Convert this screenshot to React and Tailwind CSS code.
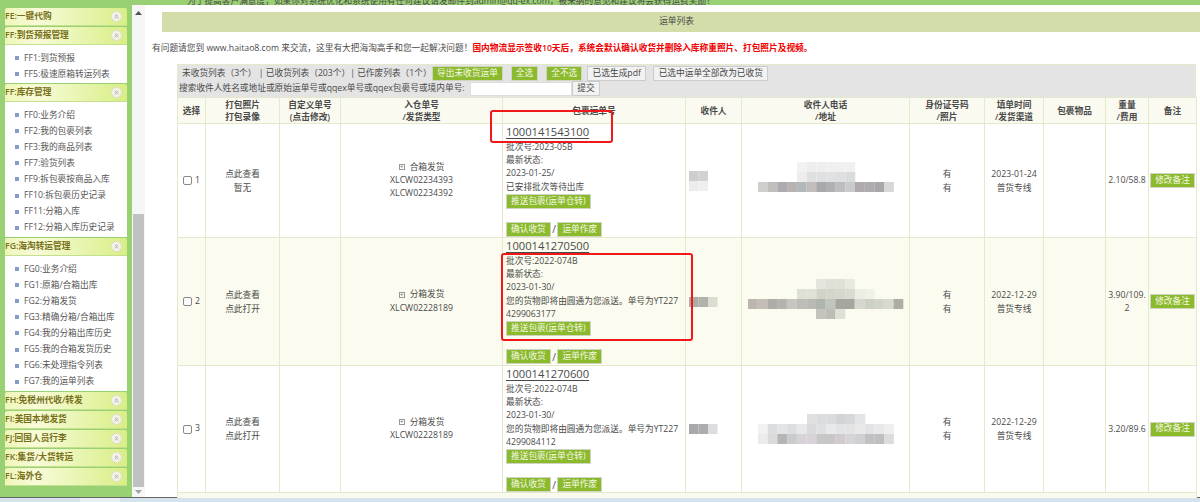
import { ChevronsUp } from "lucide-react";

const font = "font-['Open_Sans','Noto_Sans_CJK_SC',sans-serif]";

const menu = [
  { title: "FE:一键代购", listH: "", items: [] },
  { title: "FF:到货预报管理", listH: "h-[38px]", items: ["FF1:到货预报", "FF5:极速原箱转运列表"] },
  {
    title: "FF:库存管理",
    listH: "h-[135px]",
    items: [
      "FF0:业务介绍",
      "FF2:我的包裹列表",
      "FF3:我的商品列表",
      "FF7:验货列表",
      "FF9:拆包裹按商品入库",
      "FF10:拆包裹历史记录",
      "FF11:分箱入库",
      "FF12:分箱入库历史记录",
    ],
  },
  {
    title: "FG:海淘转运管理",
    listH: "h-[135px]",
    items: [
      "FG0:业务介绍",
      "FG1:原箱/合箱出库",
      "FG2:分箱发货",
      "FG3:精确分箱/合箱出库",
      "FG4:我的分箱出库历史",
      "FG5:我的合箱发货历史",
      "FG6:未处理指令列表",
      "FG7:我的运单列表",
    ],
  },
  { title: "FH:免税州代收/转发", listH: "", items: [] },
  { title: "FI:美国本地发货", listH: "", items: [] },
  { title: "FJ:回国人员行李", listH: "", items: [] },
  { title: "FK:集货/大货转运", listH: "", items: [] },
  { title: "FL:海外仓", listH: "", items: [] },
];

const headers = [
  ["选择"],
  ["打包照片", "打包录像"],
  ["自定义单号", "(点击修改)"],
  ["入仓单号", "/发货类型"],
  ["包裹运单号"],
  ["收件人"],
  ["收件人电话", "/地址"],
  ["身份证号码", "/照片"],
  ["填单时间", "/发货渠道"],
  ["包裹物品"],
  ["重量", "/费用"],
  ["备注"],
];

const rows = [
  {
    n: 1,
    height: "h-[114px]",
    bg: "bg-white",
    photo: ["点此查看", "暂无"],
    type: "合箱发货",
    codes: ["XLCW02234393", "XLCW02234392"],
    no: "1000141543100",
    batch: "批次号:2023-05B",
    date: "2023-01-25/",
    status: ["已安排批次等待出库"],
    filled: "2023-01-24",
    weight: "2.10/58.8",
    nameBlur: [
      ["#cfcdcf", "#d3d2d3"],
      ["#ececec", "#efefef"],
    ],
    addr: {
      w: 136,
      h: 30,
      shift: "mb-[7px]",
      lines: [
        { y: 0, x: 39, c: ["#f2f2f2", "#eeeeee", "#eeeeee", "#f0f0f0", "#f0f0f0", "#f0f0f0"] },
        { y: 10, x: 39, c: ["#ededed", "#dfe0e2", "#dfe0e2", "#e0e1e3", "#dddfe1", "#d9dcdc"] },
        { y: 20, x: 0, c: ["#d0cfcc", "#c0bdbc", "#aeaab0", "#b8b2b2", "#b3b8ba", "#c2bcbb", "#a9a9ad", "#b0b0b3", "#bdbcc0", "#c8cacb", "#aeaaad", "#aeacb0", "#a9a6a8", "#d7d8d9"] },
      ],
    },
  },
  {
    n: 2,
    height: "h-[128px]",
    bg: "bg-[#fbfcef]",
    photo: ["点此查看", "点此打开"],
    type: "分箱发货",
    codes: ["XLCW02228189"],
    no: "1000141270500",
    batch: "批次号:2022-074B",
    date: "2023-01-30/",
    status: ["您的货物即将由圆通为您派送。单号为YT227", "4299063177"],
    filled: "2022-12-29",
    weight: "3.90/109.2",
    nameBlur: [["#adaca6", "#b2b2ac", "#dcdcd2"]],
    addr: {
      w: 156,
      h: 40,
      shift: "mb-[6px]",
      lines: [
        { y: 0, x: 68, c: ["#e4e5dc", "#dedfd5", "#dfe0d6", "#e8e9de"] },
        { y: 10, x: 49, c: ["#dce0d5", "#e0e1d6", "#d1d3c8", "#d4d5cb", "#d6d8cd", "#d9dbd0", "#eceee3", "#f1f2e7"] },
        { y: 20, x: 0, c: ["#bdb5b0", "#c4bdb7", "#b0ada8", "#b6b2ac", "#c8c5bf", "#bfbcb6", "#b9bab4", "#aeb4ae", "#c2c5bc", "#a7a7a0", "#a6a6a0", "#d5d8cd", "#cdd1c5", "#d2d3c9", "#d9dacf", "#aeada3"] },
        { y: 30, x: 68, c: ["#c4c4bd", "#bdbdb5", "#e0e1d6"] },
      ],
    },
  },
  {
    n: 3,
    height: "h-[127px]",
    bg: "bg-white",
    photo: ["点此查看", "点此打开"],
    type: "分箱发货",
    codes: ["XLCW02228189"],
    no: "1000141270600",
    batch: "批次号:2022-074B",
    date: "2023-01-30/",
    status: ["您的货物即将由圆通为您派送。单号为YT227", "4299084112"],
    filled: "2022-12-29",
    weight: "3.20/89.6",
    nameBlur: [["#a9a8aa", "#acabad", "#dddde0"]],
    addr: {
      w: 136,
      h: 30,
      shift: "",
      lines: [
        { y: 0, x: 49, c: ["#e0e0e2", "#dbdcde", "#dadbdd", "#d2d3d5", "#d6d8da", "#e4e5e6"] },
        { y: 10, x: 0, c: ["#f2f2f3", "#dcdde0", "#e3e4e6", "#dddee1", "#e8e8ea", "#d9dadc", "#dfe0e2", "#e8e9eb", "#e3e4e6", "#e2e3e5", "#e9e9ea", "#e2e3e4", "#e8e8e9", "#eeeeef"] },
        { y: 20, x: 0, c: ["#ebebec", "#dadadb", "#b5b5b3", "#c8ccce", "#d5d3d5", "#d9d3d9", "#c7c7ca", "#cbc6c6", "#cfcbcf", "#d6d4d8", "#d0d0d2", "#c1c1c3", "#bfbfc1", "#dcdcde"] },
      ],
    },
  },
];

// 打码的地址,按色块画
const AddressBlur = ({ w, h, shift, lines }) => (
  <svg width={w} height={h} className={`mx-auto block ${shift}`}>
    {lines.map((r) =>
      r.c.map((c, i) => (
        <rect key={r.y + "-" + i} x={r.x + i * 9.7} y={r.y} width="9.8" height="10" fill={c} />
      ))
    )}
  </svg>
);

const NameBlur = ({ cells }) => (
  <svg width="30" height={cells.length * 10} className="block ml-[3px]">
    {cells.map((row, y) =>
      row.map((c, x) => <rect key={y + "-" + x} x={x * 9.5} y={y * 10} width="9.5" height="10" fill={c} />)
    )}
  </svg>
);

const GreenBtn = ({ children, className = "" }) => (
  <span
    className={`flex items-center justify-center w-fit h-[15px] bg-[#8cba2d] border border-[#cfd4c4] text-[#f4f8e6] px-[4px] whitespace-nowrap ${className}`}
  >
    {children}
  </span>
);

const GrayBtn = ({ children, className = "" }) => (
  <span
    className={`flex items-center justify-center h-[15px] bg-[#f2f2f2] border border-[#cccccc] text-[#444] whitespace-nowrap ${className}`}
  >
    {children}
  </span>
);

const Sidebar = () => (
  <aside className="w-[132px] bg-[#9ad074] pl-[5px] pr-[5px] pt-[3px] shrink-0 text-[8.7px]">
    {menu.map((m) => (
      <div key={m.title} className="mb-px">
        <div className="h-[18px] flex items-center justify-between bg-gradient-to-r from-[#eef6b8] via-[#f8fbd8] via-25% to-[#d8ee84] border-b border-[#c3e08c] pr-[5px] rounded-t-[2px]">
          <span className="text-[#77701a] font-semibold leading-none">{m.title}</span>
          <span className="w-[11px] h-[11px] rounded-full bg-[#f4f4ea] border border-[#dedfd0] flex items-center justify-center">
            <ChevronsUp size={7} strokeWidth={2} className="text-[#777]" />
          </span>
        </div>
        {m.items.length > 0 && (
          <ul className={`bg-white pl-[10px] pt-[5px] ${m.listH}`}>
            {m.items.map((it) => (
              <li key={it} className="h-[16.1px] flex items-center gap-[5px] text-[#555] leading-none">
                <span className="w-[4px] h-[4px] bg-[#7f9fc9] shrink-0" />
                <span className="whitespace-nowrap">{it}</span>
              </li>
            ))}
          </ul>
        )}
      </div>
    ))}
  </aside>
);

const Scrollbar = () => (
  <div className="w-[13px] bg-[#f6f6f6] flex flex-col items-center shrink-0">
    <div className="h-[16px] flex items-center justify-center">
      <svg width="7" height="4">
        <path d="M3.5 0L7 4H0z" fill="#555" />
      </svg>
    </div>
    <div className="h-[193px]" />
    <div className="w-[11px] h-[273px] bg-[#c1c1c1]" />
    <div className="h-[10px] flex items-center justify-center">
      <svg width="7" height="4">
        <path d="M0 0H7L3.5 4z" fill="#a3a3a3" />
      </svg>
    </div>
  </div>
);

const cell = "border border-[#e4e9cc] p-0";

export default function App() {
  return (
    <div className={`relative w-[1200px] h-[502px] overflow-hidden bg-white flex flex-col text-[8.7px] text-[#4a4a4a] ${font}`}>
      <div className="h-[5px] bg-[#9ad074] overflow-hidden pl-[187px] shrink-0">
        <div className="-mt-[5px] leading-[13px] whitespace-nowrap">
          为了提高客户满意度&#65292;如果你对系统优化和系统使用有任何建议请发邮件到<u>admin@qq-ex.com</u>&#65292;被采纳的意见和建议将会获得运费奖励&#65281;
        </div>
      </div>
      <div className="flex-1 flex min-h-0">
        <Sidebar />
        <Scrollbar />
        <main className="flex-1 min-w-0 relative">
          <div className="ml-[17px] mt-[7px] h-[20px] bg-[#d3dda9] flex items-center justify-center pr-[9px]">
            运单列表
          </div>
          <p className="mt-[9px] ml-[7px] h-[14px] leading-[14px] whitespace-nowrap">
            有问题请您到 www.haitao8.com 来交流&#65292;这里有大把海淘高手和您一起解决问题&#65281;
            <b className="text-[#f00000] font-semibold">
              国内物流显示签收10天后&#65292;系统会默认确认收货并删除入库称重照片、打包照片及视频。
            </b>
          </p>
          <div className="ml-[32px] w-[1019px] mt-[9px] bg-[#e4e4e4] border border-[#e4e9cc] border-b-0 h-[33px] pt-px">
            <div className="h-[15px] flex items-center whitespace-nowrap pl-[4px]">
              <span className="w-[250px]">未收货列表&#65288;3个&#65289;&nbsp;|&nbsp;已收货列表&#65288;203个&#65289;|&nbsp;已作废列表&#65288;1个&#65289;</span>
              <GreenBtn className="w-[71px] px-0">导出未收货运单</GreenBtn>
              <GreenBtn className="ml-[8px] w-[28px] px-0">全选</GreenBtn>
              <GreenBtn className="ml-[8px] w-[37px] px-0">全不选</GreenBtn>
              <GrayBtn className="ml-[5px] w-[59px]">已选生成pdf</GrayBtn>
              <GrayBtn className="ml-[7px] w-[115px]">已选中运单全部改为已收货</GrayBtn>
            </div>
            <div className="h-[15px] flex items-center whitespace-nowrap pl-[1px]">
              <span className="w-[291px]">搜索收件人姓名或地址或原始运单号或qqex单号或qqex包裹号或境内单号:</span>
              <span className="w-[102px] h-[14px] bg-white border border-[#dddddd]" />
              <GrayBtn className="w-[28px]">提交</GrayBtn>
            </div>
          </div>
          <table className="ml-[32px] w-[1019px] table-fixed border-collapse">
            <colgroup>
              <col className="w-[28px]" />
              <col className="w-[74px]" />
              <col className="w-[61px]" />
              <col className="w-[162px]" />
              <col className="w-[183px]" />
              <col className="w-[56px]" />
              <col className="w-[168px]" />
              <col className="w-[75px]" />
              <col className="w-[59px]" />
              <col className="w-[62px]" />
              <col className="w-[43px]" />
              <col className="w-[48px]" />
            </colgroup>
            <thead>
              <tr className="h-[26px] bg-[#fafaf0]">
                {headers.map((h) => (
                  <th key={h[0]} className={`${cell} font-semibold leading-[12px]`}>
                    {h.map((l) => (
                      <div key={l}>{l}</div>
                    ))}
                  </th>
                ))}
              </tr>
            </thead>
            <tbody>
              {rows.map((r) => (
                <tr key={r.n} className={`${r.height} ${r.bg}`}>
                  <td className={`${cell} text-center whitespace-nowrap`}>
                    <span className="inline-block w-[9px] h-[9px] border border-[#888888] rounded-[2px] bg-white align-middle mr-[3px]" />
                    <span className="align-middle">{r.n}</span>
                  </td>
                  <td className={`${cell} text-center leading-[14px]`}>
                    <div>{r.photo[0]}</div>
                    <div>{r.photo[1]}</div>
                  </td>
                  <td className={cell} />
                  <td className={`${cell} text-center leading-[13.3px]`}>
                    <div className="flex items-center justify-center gap-[5px]">
                      <span className="w-[6px] h-[6px] border border-[#999999] text-[#666666] text-[6px] leading-none flex items-center justify-center">+</span>
                      {r.type}
                    </div>
                    {r.codes.map((c) => (
                      <div key={c}>{c}</div>
                    ))}
                  </td>
                  <td className={`${cell} pl-[3px] pt-[2px] align-top leading-[13.2px]`}>
                    <div className="text-[11.2px] leading-[12px] mb-[3px] underline decoration-1 underline-offset-2">{r.no}</div>
                    <div>{r.batch}</div>
                    <div>最新状态:</div>
                    <div>{r.date}</div>
                    {r.status.map((s) => (
                      <div key={s} className="whitespace-nowrap">{s}</div>
                    ))}
                    <GreenBtn>推送包裹(运单仓转)</GreenBtn>
                    <div className="mt-[13px] flex items-center">
                      <GreenBtn>确认收货</GreenBtn>
                      <span className="mx-[1.5px] text-[10px] leading-none">/</span>
                      <GreenBtn>运单作废</GreenBtn>
                    </div>
                  </td>
                  <td className={cell}>
                    <NameBlur cells={r.nameBlur} />
                  </td>
                  <td className={cell}>
                    <AddressBlur {...r.addr} />
                  </td>
                  <td className={`${cell} text-center leading-[14px]`}>
                    <div>有</div>
                    <div>有</div>
                  </td>
                  <td className={`${cell} text-center leading-[14px]`}>
                    <div>{r.filled}</div>
                    <div>普货专线</div>
                  </td>
                  <td className={cell} />
                  <td className={`${cell} text-center leading-[13px] break-all`}>{r.weight}</td>
                  <td className={cell}>
                    <GreenBtn className="mx-auto px-[3px]">修改备注</GreenBtn>
                  </td>
                </tr>
              ))}
              <tr className="h-[5px] bg-[#f9f9ee]">
                <td colSpan={12} className="border-x border-[#e4e9cc] p-0" />
              </tr>
            </tbody>
          </table>
          {/* 截图上的红框 */}
          <div className="absolute left-[345px] top-[105px] w-[123px] h-[33px] border-[2px] border-[#f01818] rounded-[3px] pointer-events-none" />
          <div className="absolute left-[356px] top-[248px] w-[192px] h-[88px] border-[2px] border-[#f01818] rounded-[3px] pointer-events-none" />
        </main>
      </div>
      <div className="h-[5px] bg-[#d5e3ec] border-t border-[#666666] shrink-0">
        <div className="ml-[80px] w-[40px] h-full bg-[#e8f0f5]" />
      </div>
    </div>
  );
}
